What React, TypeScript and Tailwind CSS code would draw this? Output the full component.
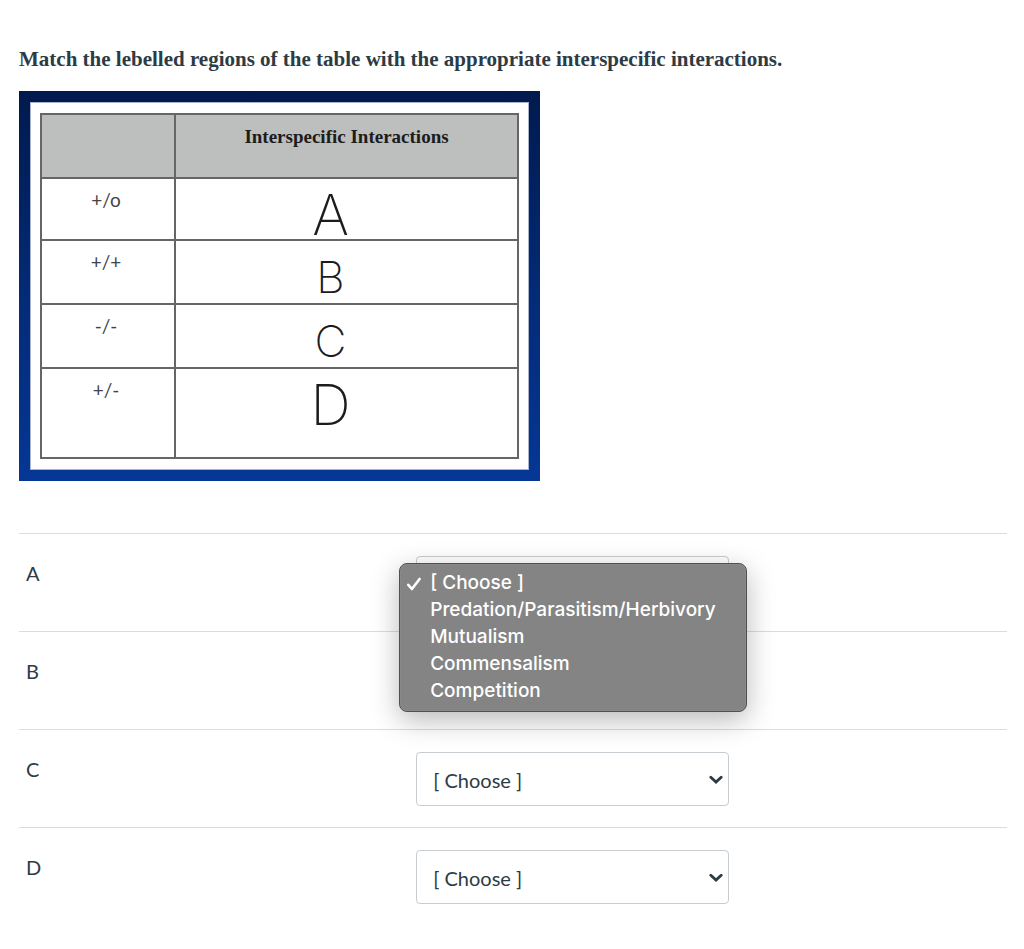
import React, { useState } from "react";

const choices = [
  "[ Choose ]",
  "Predation/Parasitism/Herbivory",
  "Mutualism",
  "Commensalism",
  "Competition",
];

const tableRows = [
  { sign: "+/o", letter: "A", height: "h-[62px]", size: "text-[56px]" },
  { sign: "+/+", letter: "B", height: "h-[64px]", size: "text-[44px]" },
  { sign: "-/-", letter: "C", height: "h-[64px]", size: "text-[44px]" },
  { sign: "+/-", letter: "D", height: "h-[90px]", size: "text-[56px]" },
];

const prompts = ["A", "B", "C", "D"];

const InteractionsTable: React.FC = () => (
  <div className="w-[521px] max-w-full bg-linear-to-b from-[#001a4d] via-[#032a75] via-50% to-[#053796] p-[11px]">
    <div className="border border-[#a9b4cc] bg-white px-[9px] py-[10px]">
      <table className="w-full table-fixed border-collapse text-[#1c1c1c]">
        <thead>
          <tr className="h-[64px] bg-[#bdbfbe] align-top">
            <td className="w-[134px] border-2 border-[#666666]" />
            <th className="border-2 border-[#666666] pt-[10px] font-['Liberation_Serif',serif] text-[19px] leading-6 font-bold">
              Interspecific Interactions
            </th>
          </tr>
        </thead>
        <tbody>
          {tableRows.map((row) => (
            <tr key={row.letter} className={`${row.height} align-top`}>
              <th className="border-2 border-[#666666] pt-[9px] pr-1 font-[Lato,sans-serif] text-[19px] leading-6 font-normal text-[#444444]">
                {row.sign}
              </th>
              <td className="border-2 border-[#666666] pt-3 pr-8 text-center font-[Inter,sans-serif] font-extralight">
                <span className={`${row.size} block h-12 leading-12`}>{row.letter}</span>
              </td>
            </tr>
          ))}
        </tbody>
      </table>
    </div>
  </div>
);

type MenuProps = {
  value: string;
  onPick: (choice: string) => void;
};

const ChoiceMenu: React.FC<MenuProps> = ({ value, onPick }) => (
  <div
    role="listbox"
    aria-label="Choices"
    className="absolute top-[7px] -left-[17px] z-10 w-[348px] rounded-lg border border-[#505050] bg-[#848484] py-1.5 font-[Inter,sans-serif] text-[19px] text-white shadow-[0_8px_28px_rgba(0,0,0,0.28)] inset-shadow-[0_0_1px_#bbbbbb]"
  >
    {choices.map((choice) => (
      <button
        key={choice}
        type="button"
        role="option"
        aria-selected={choice === value}
        onClick={() => onPick(choice)}
        className="flex h-[27px] w-full items-center pl-[7px] text-left font-medium"
      >
        <span className="w-[23px] shrink-0">
          {choice === value && (
            <svg width="14" height="14" viewBox="0 0 14 14" fill="none" aria-hidden="true">
              <path
                d="M1.3 7.8 4.9 12 12.6 2"
                stroke="white"
                strokeWidth="2.6"
                strokeLinecap="round"
                strokeLinejoin="round"
              />
            </svg>
          )}
        </span>
        {choice}
      </button>
    ))}
  </div>
);

const App: React.FC = () => {
  const [answers, setAnswers] = useState<Record<string, string>>({});
  const [openPrompt, setOpenPrompt] = useState<string | null>("A");

  const setAnswer = (prompt: string, choice: string) => {
    setAnswers({ ...answers, [prompt]: choice });
    setOpenPrompt(null);
  };

  return (
    <main className="min-h-screen bg-white pt-[47px] pr-[17px] pb-5 pl-[19px] font-[Lato,sans-serif] text-xl text-[#2d3b45]">
      <h1 className="font-['Liberation_Serif',serif] text-[21px] leading-6 font-bold">
        Match the lebelled regions of the table with the appropriate interspecific interactions.
      </h1>

      <div className="mt-5 mb-[52px]">
        <InteractionsTable />
      </div>

      {/* Matching rows */}
      {prompts.map((prompt) => (
        <div key={prompt} className="flex border-t border-[#dcdcdc] pt-[22px] pb-[21px]">
          <label htmlFor={`answer-${prompt}`} className="w-2/5 shrink-0 pt-[3px] pl-[7px] leading-7">
            {prompt}
          </label>
          <div className="relative ml-0.5 w-full max-w-[313px]">
            <select
              id={`answer-${prompt}`}
              value={answers[prompt] ?? choices[0]}
              onChange={(e) => setAnswer(prompt, e.target.value)}
              className="block h-[54px] w-full appearance-none rounded border border-[#c7cdd1] bg-white pt-0.5 pl-4"
            >
              {choices.map((choice) => (
                <option key={choice}>{choice}</option>
              ))}
            </select>
            <svg
              className="pointer-events-none absolute top-[23px] right-[6px]"
              width="14"
              height="10"
              viewBox="0 0 14 10"
              fill="none"
              aria-hidden="true"
            >
              <path d="M1.8 2.2 7 7 12.2 2.2" stroke="#2d3b45" strokeWidth="2.8" strokeLinecap="round" />
            </svg>
            {openPrompt === prompt && (
              <ChoiceMenu
                value={answers[prompt] ?? choices[0]}
                onPick={(choice) => setAnswer(prompt, choice)}
              />
            )}
          </div>
        </div>
      ))}
    </main>
  );
};

export default App;
